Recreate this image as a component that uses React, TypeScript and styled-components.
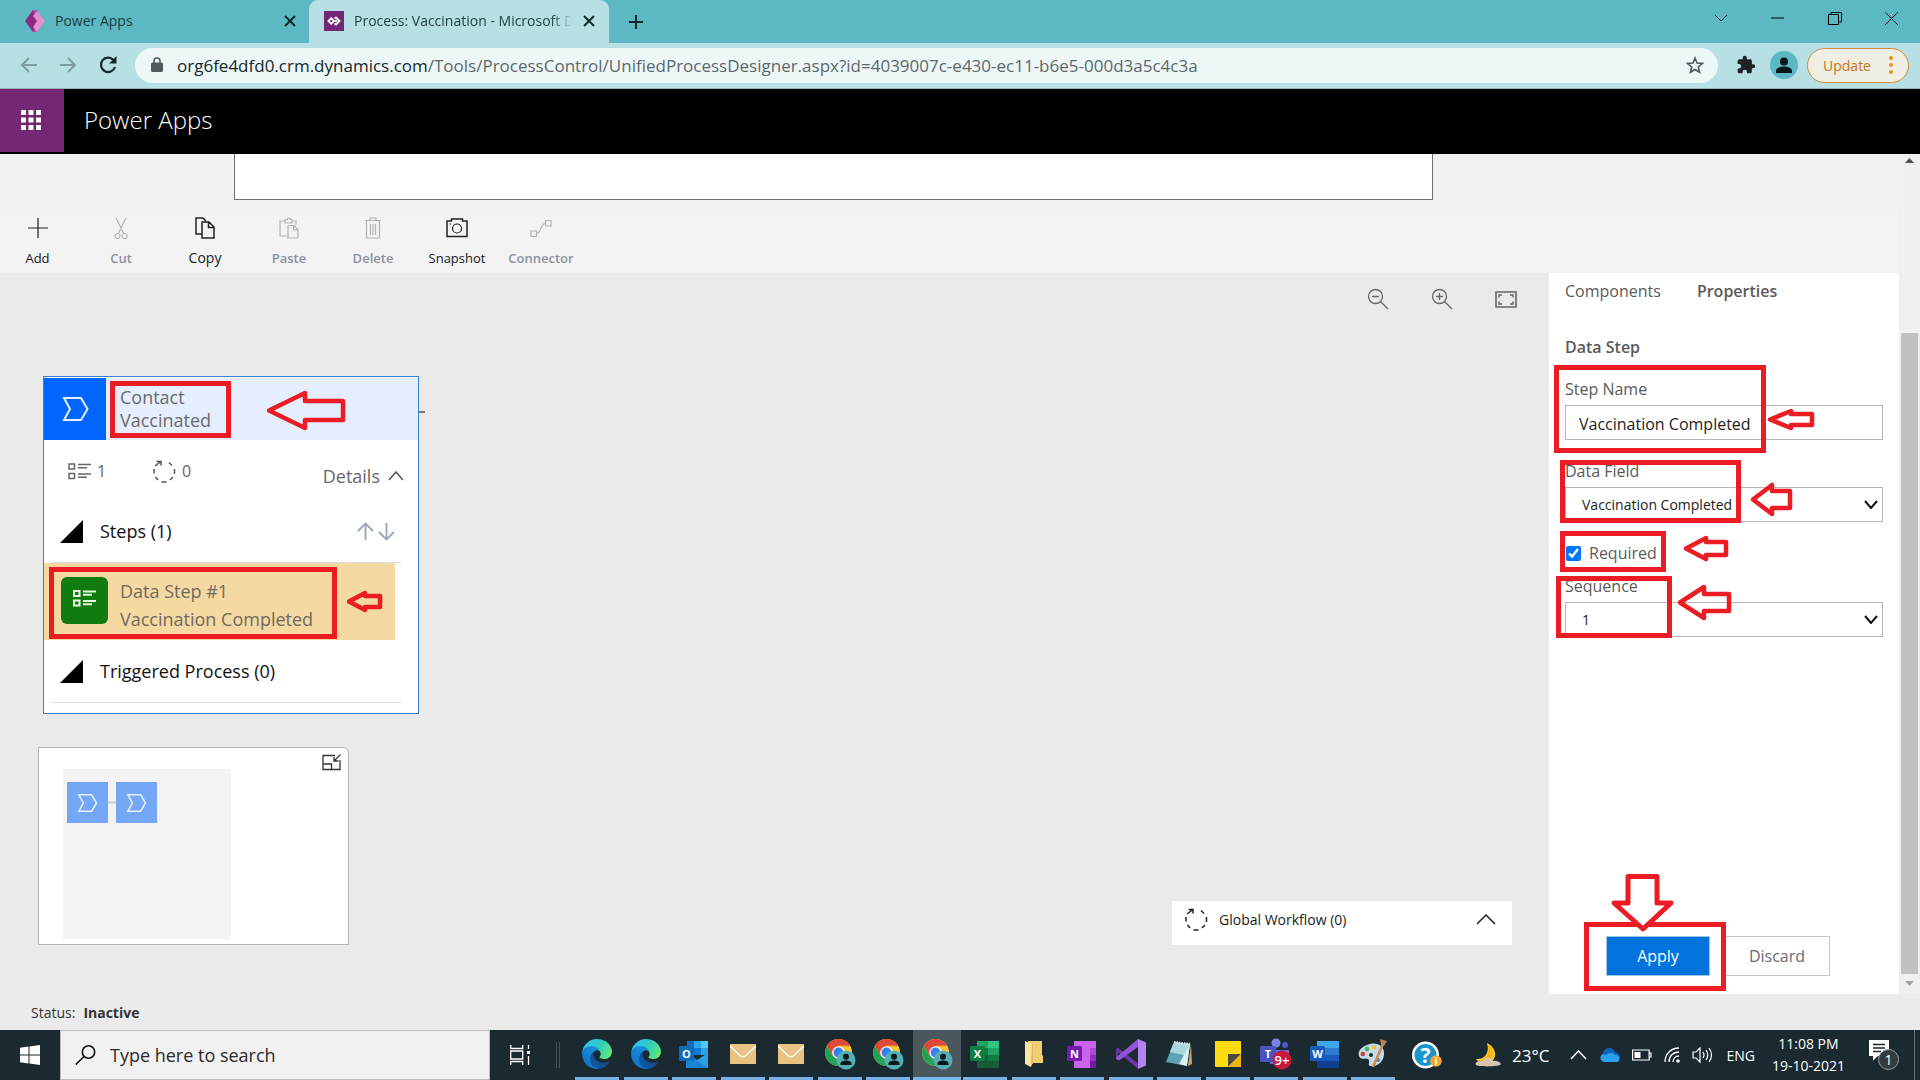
import React from "react";
import styled, { createGlobalStyle } from "styled-components";

const RED = "#ec1c24";

const GlobalStyle = createGlobalStyle`
  *, *::before, *::after { box-sizing: border-box; }
  body { margin: 0; font-family: "Open Sans", "Noto Sans", sans-serif; color: #111; background: #ebebeb; }
  button, input, select, textarea { font: inherit; color: inherit; margin: 0; }
  button { border: 0; padding: 0; background: none; display: flex; align-items: center; justify-content: center; }
  svg { display: block; flex: none; }
`;

/* ---------- layout ---------- */

const Shell = styled.div`
  display: flex;
  flex-direction: column;
  min-height: 100vh;
  overflow: hidden;
`;

const TabStrip = styled.div`
  display: flex;
  height: 43px;
  background: #5cb8c2;
`;

const Tab = styled.div<{ $active?: boolean }>`
  display: flex;
  align-items: center;
  gap: 10px;
  width: ${(p) => (p.$active ? 300 : 309)}px;
  padding: ${(p) => (p.$active ? "0 14px 2px 15px" : "0 13px 2px 25px")};
  border-radius: 9px 9px 0 0;
  background: ${(p) => (p.$active ? "#b7e0e4" : "transparent")};
  font-size: 14px;
  color: #1d3c40;
`;

const TabTitle = styled.span<{ $fade?: boolean }>`
  flex: 1;
  overflow: hidden;
  white-space: nowrap;
  ${(p) => p.$fade && "mask-image: linear-gradient(to right, #000 90%, transparent);"}
`;

const NewTab = styled.button`
  width: 54px;
`;

const WindowControls = styled.div`
  display: flex;
  margin-left: auto;
  height: 36px;
`;

const WindowButton = styled.button`
  width: 57px;
`;

const AddressRow = styled.div`
  display: flex;
  align-items: center;
  height: 46px;
  padding: 0 11px 1px 8px;
  background: #b7e0e4;
  border-bottom: 1px solid #8fb3b6;
`;

const NavButton = styled.button`
  width: 40px;
  height: 36px;
`;

const UrlBox = styled.div`
  display: flex;
  flex: 1;
  align-items: center;
  gap: 13px;
  height: 35px;
  margin-left: 7px;
  padding: 0 14px 0 15px;
  border-radius: 18px;
  background: #edf7f8;
`;

const Url = styled.span`
  flex: 1;
  overflow: hidden;
  white-space: nowrap;
  font-size: 17px;
  color: #5d6769;
  b { font-weight: 400; color: #16282b; }
`;

const BrowserActions = styled.div`
  display: flex;
  align-items: center;
  gap: 14px;
  padding-left: 18px;
`;

const Avatar = styled.button`
  width: 28px;
  height: 28px;
  border-radius: 50%;
  background: #5cb8c2;
`;

const UpdateButton = styled.button`
  gap: 18px;
  width: 102px;
  height: 35px;
  margin-left: -5px;
  border: 1px solid #d28a3c;
  border-radius: 18px;
  background: #efeee2;
  font-size: 14px;
  color: #c8731d;
`;

const AppBar = styled.header`
  display: flex;
  align-items: center;
  height: 65px;
  background: #000;
`;

const Waffle = styled.button`
  align-self: flex-start;
  width: 64px;
  height: 63px;
  padding: 0 2px 1px 0;
  background: #742774;
`;

const AppName = styled.span`
  padding: 0 0 4px 20px;
  font-size: 24px;
  font-weight: 300;
  color: #fff;
`;

const Workspace = styled.main`
  display: flex;
  flex: 1;
`;

const Designer = styled.div`
  display: flex;
  flex: 1;
  flex-direction: column;
`;

const FormStrip = styled.div`
  height: 55px;
  padding-left: 234px;
  background: #f1f1f1;
`;

const Description = styled.textarea`
  display: block;
  width: 72%;
  height: 46px;
  border: 1px solid #6e6e6e;
  border-top: 0;
  border-radius: 0;
  background: #fff;
  resize: none;
`;

const CommandBar = styled.div`
  display: flex;
  height: 64px;
  background: #f3f3f3;
  padding-top: 7px;
`;

const Command = styled.button<{ $large?: boolean }>`
  flex-direction: column;
  justify-content: flex-start;
  gap: 7px;
  width: 84px;
  &:first-child { width: 79px; padding-right: 4px; }
  font-size: ${(p) => (p.$large ? 14 : 13)}px;
  line-height: 22px;
  color: #15171c;
  &:disabled { color: #8a92a2; font-weight: 600; }
`;

const Columns = styled.div`
  display: flex;
  flex: 1;
`;

const ScrollBar = styled.div`
  display: flex;
  flex-direction: column;
  align-items: center;
  width: 21px;
  padding: 4px 0 8px;
  background: #f0f0f0;
`;

const ScrollThumb = styled.div`
  flex: 1;
  width: 17px;
  margin: 170px 0 7px;
  background: #c1c1c1;
`;

const Canvas = styled.section`
  position: relative;
  flex: 1;
  background: #eaeaea;
`;

const ZoomTools = styled.div`
  position: absolute;
  top: 15px;
  right: 32px;
  display: flex;
  gap: 42px;
`;

const StageCard = styled.article`
  position: absolute;
  left: 43px;
  top: 103px;
  width: 376px;
  padding: 1px 0 10px;
  border: 1px solid #3a7fd4;
  background: #fff;
`;

const StageHeader = styled.div`
  display: flex;
  align-items: center;
  gap: 14px;
  background: #e5eeff;
  font-size: 18px;
  line-height: 23px;
  color: #6b6b6b;
`;

const StageIcon = styled.div`
  display: flex;
  align-items: center;
  justify-content: center;
  width: 62px;
  height: 62px;
  background: #0066ff;
`;

const Stub = styled.i`
  position: absolute;
  left: 375px;
  top: 34px;
  width: 6px;
  height: 2px;
  background: #777;
`;

const Stats = styled.div`
  display: flex;
  align-items: center;
  height: 62px;
  padding: 0 14px 0 24px;
  font-size: 16px;
  color: #666;
`;

const Stat = styled.span`
  display: flex;
  align-items: center;
  gap: 6px;
  width: 85px;
`;

const Details = styled.button`
  gap: 8px;
  margin-left: auto;
  padding-top: 9px;
  font-size: 18px;
`;

const GroupRow = styled.div`
  display: flex;
  align-items: center;
  gap: 17px;
  height: 61px;
  margin: 0 17px 0 7px;
  padding: 0 6px 2px 9px;
  border-bottom: 1px solid #dcdcdc;
  font-size: 18px;
  color: #111;
`;

const Reorder = styled.span`
  display: flex;
  gap: 4px;
  margin-left: auto;
`;

const StepRow = styled.div`
  display: flex;
  gap: 12px;
  width: 351px;
  height: 77px;
  margin-bottom: 2px;
  padding: 14px 0 0 17px;
  background: #f5d9a3;
  font-size: 18px;
  line-height: 28px;
  color: #706a5e;
`;

const StepIcon = styled.div`
  display: flex;
  align-items: center;
  justify-content: center;
  width: 47px;
  height: 47px;
  padding-bottom: 5px;
  border-radius: 6px;
  background: #107c10;
`;

const MiniMap = styled.aside`
  position: absolute;
  left: 38px;
  bottom: 49px;
  display: flex;
  justify-content: space-between;
  width: 311px;
  height: 198px;
  padding: 6px 7px 5px 24px;
  border: 1px solid #b4b4b4;
  border-radius: 0 6px 0 0;
  background: #fff;
`;

const MiniView = styled.div`
  display: flex;
  align-items: flex-start;
  width: 168px;
  margin-top: 15px;
  padding: 13px 4px;
  background: #f4f4f4;
`;

const MiniStage = styled.div`
  display: flex;
  align-items: center;
  justify-content: center;
  width: 41px;
  height: 41px;
  background: #74a7f5;
`;

const MiniLink = styled.div`
  align-self: flex-start;
  width: 8px;
  height: 3px;
  margin-top: 19px;
  background: #d6d6d6;
`;

const MiniToggle = styled.button`
  align-self: flex-start;
`;

const GlobalWorkflow = styled.button`
  position: absolute;
  right: 37px;
  bottom: 49px;
  justify-content: flex-start;
  gap: 11px;
  width: 340px;
  height: 44px;
  padding: 0 16px 8px 13px;
  background: #fff;
  font-size: 14px;
  color: #1a1a1a;
  svg:last-child { margin-left: auto; }
`;

const Panel = styled.aside`
  position: relative;
  display: flex;
  flex-direction: column;
  width: 350px;
  padding: 6px 16px 18px;
  background: #fff;
  font-size: 16px;
  line-height: 24px;
  color: #5a5a5a;
`;

const PanelTabs = styled.nav`
  display: flex;
  gap: 36px;
`;

const PanelTab = styled.button<{ $active?: boolean }>`
  font-weight: ${(p) => (p.$active ? 600 : 400)};
`;

const PanelTitle = styled.h2`
  margin: 32px 0 18px;
  font-size: 16px;
  line-height: 24px;
  font-weight: 600;
`;

const Field = styled.div`
  display: flex;
  flex-direction: column;
  gap: 4px;
  margin-bottom: 19px;
`;

const TextInput = styled.input`
  height: 35px;
  padding: 3px 13px 0;
  border: 1px solid #b5b5b5;
  border-radius: 0;
  font-size: 16px;
  color: #1c1c1c;
`;

const SelectWrap = styled.div`
  display: grid;
  align-items: center;
  > * { grid-area: 1 / 1; }
  > svg { justify-self: end; margin-right: 5px; pointer-events: none; }
`;

const Select = styled.select`
  appearance: none;
  width: 100%;
  height: 35px;
  padding: 0 16px;
  border: 1px solid #b5b5b5;
  border-radius: 0;
  background: #fff;
  font-size: 14px;
  color: #222;
`;

const CheckRow = styled.label`
  display: flex;
  align-items: center;
  gap: 8px;
  margin-bottom: 9px;
  padding-left: 1px;
  input { width: 15px; height: 15px; accent-color: #0075ff; }
`;

const PanelActions = styled.div`
  display: flex;
  gap: 14px;
  margin-top: auto;
  padding-left: 41px;
`;

const ActionButton = styled.button<{ $primary?: boolean }>`
  width: ${(p) => (p.$primary ? 104 : 106)}px;
  height: 40px;
  border: 1px solid ${(p) => (p.$primary ? "#9cc8ee" : "#c8c8c8")};
  background: ${(p) => (p.$primary ? "#0073dc" : "#fff")};
  color: ${(p) => (p.$primary ? "#fff" : "#6b6b6b")};
`;

const StatusBar = styled.footer`
  display: flex;
  align-items: center;
  gap: 8px;
  height: 36px;
  padding: 0 31px;
  background: #ebebeb;
  font-size: 14px;
  color: #333;
`;

const Markup = styled.svg`
  position: absolute;
  left: 0;
  top: 0;
  overflow: visible;
  pointer-events: none;
`;

/* ---------- taskbar layout ---------- */

const Taskbar = styled.div`
  display: flex;
  height: 50px;
  background: #1b2a30;
  color: #fff;
`;

const TaskButton = styled.button<{ $w: number }>`
  width: ${(p) => p.$w}px;
`;

const SearchBox = styled.label`
  display: flex;
  align-items: center;
  gap: 14px;
  width: 430px;
  padding: 0 14px;
  border: 1px solid #bdbdbd;
  background: #f1f1f1;
  color: #111;
  input {
    flex: 1;
    border: 0;
    outline: 0;
    padding: 0;
    background: none;
    font-size: 18px;
    &::placeholder { color: #2b2b2b; opacity: 1; }
  }
`;

const Divider = styled.div`
  align-self: center;
  width: 4px;
  height: 26px;
  margin: 0 13px 0 6px;
  border: solid #47545a;
  border-width: 0 1px;
`;

const Apps = styled.div`
  display: flex;
  justify-content: space-between;
  width: 824px;
`;

const AppButton = styled.button<{ $active?: boolean }>`
  width: 48px;
  border-style: solid;
  border-width: 0 0 3px;
  border-image: ${(p) =>
    p.$active
      ? "linear-gradient(#76b9ed, #76b9ed) 1"
      : "linear-gradient(to right, transparent 5px, #76b0e4 5px, #76b0e4 43px, transparent 43px) 3"};
  background: ${(p) => (p.$active ? "#4a575d" : "transparent")};
`;

const Tray = styled.div`
  display: flex;
  align-items: center;
  margin-left: auto;
  font-size: 17px;
`;

const Weather = styled.button`
  gap: 10px;
  margin-right: 21px;
`;

const TrayIcons = styled.div`
  display: flex;
  align-items: center;
  gap: 12px;
`;

const Language = styled.button`
  padding: 0 17px 0 13px;
  font-size: 14px;
`;

const Clock = styled.button`
  flex-direction: column;
  margin-right: 24px;
  font-size: 14px;
  line-height: 22px;
`;

const ShowDesktop = styled.div`
  align-self: stretch;
  width: 6px;
  margin-left: 14px;
  border-left: 1px solid #69747a;
`;

/* ---------- annotations ---------- */

type BoxProps = { x: number; y: number; w: number; h: number };
const Frame = ({ x, y, w, h }: BoxProps) => (
  <rect x={x + 2.5} y={y + 2.5} width={w - 5} height={h - 5} fill="none" stroke={RED} strokeWidth="5" />
);

/* neck: where the head meets the shaft; inset: gap between head edge and shaft edge */
const LeftArrow = ({ x, y, w, h, neck, inset }: BoxProps & { neck: number; inset: number }) => {
  const l = x + 2, r = x + w - 2, t = y + 3, b = y + h - 3, n = x + neck - 2;
  const st = y + inset + 2, sb = y + h - inset - 2;
  return (
    <path
      d={`M${l} ${y + h / 2}L${n} ${t}V${st}H${r}V${sb}H${n}V${b}Z`}
      fill="none" stroke={RED} strokeWidth="4.500" strokeLinejoin="round"
    />
  );
};

/* ---------- small icons ---------- */

const Close = () => (
  <svg width="12" height="12" viewBox="0 0 12 12" stroke="#10282b" strokeWidth="2"><path d="M1 1l10 10M11 1L1 11" /></svg>
);

const Chevron = ({ w = 16, h = 9, sw = 1.5, c = "#555", down = false }) => (
  <svg width={w} height={h} viewBox={`0 0 ${w} ${h}`} fill="none" stroke={c} strokeWidth={sw}>
    <path d={down ? `M1 1L${w / 2} ${h - 1}L${w - 1} 1` : `M1 ${h - 1}L${w / 2} 1L${w - 1} ${h - 1}`} />
  </svg>
);

const StageGlyph = ({ w = 27, h = 24 }) => (
  <svg width={w} height={h} viewBox="0 0 27 24" fill="none" stroke="#e8f1ff" strokeWidth="2">
    <path d="M2 1H19L25.500 12L19 23H2L8 12Z" />
  </svg>
);

const ListGlyph = ({ c = "#666", sw = 1.5 }) => (
  <svg width="23" height="18" viewBox="0 0 23 18" fill="none" stroke={c} strokeWidth={sw}>
    <path d="M1 2h5.500v5H1zM1 11.500h5.500v5H1zM10 2.500h13M10 5.700h9M10 12h13M10 15.200h9" />
  </svg>
);

const CycleGlyph = ({ c = "#555" }) => (
  <svg width="23" height="23" viewBox="0 0 23 23" fill="none" stroke={c} strokeWidth="1.500">
    <path d="M2 6L8 1.500M3.500 1.500H8V5.500" />
    <path d="M16 2.500l3 3M21.500 9v5M20 17l-3 3M13.500 22h-5M5 20l-2.500-3M1 13.500V9" />
  </svg>
);

const Triangle = () => (
  <svg width="23" height="23" viewBox="0 0 23 23"><path d="M23 0V23H0Z" fill="#000" /></svg>
);

const Arrow = ({ down = false }) => (
  <svg width="17" height="19" viewBox="0 0 17 19" fill="none" stroke="#9aa5b5" strokeWidth="1.800">
    <path d={down ? "M8.500 1V17M1 10L8.500 17.500L16 10" : "M8.500 18V2M1 9L8.500 1.500L16 9"} />
  </svg>
);

const Magnifier = ({ plus = false }) => (
  <svg width="22" height="22" viewBox="0 0 22 22" fill="none" stroke="#666" strokeWidth="1.300">
    <circle cx="8.500" cy="8.500" r="7" />
    <path d={`M13.500 13.500L21 21M5 8.500h7${plus ? "M8.500 5v7" : ""}`} />
  </svg>
);

const commandIcons: Record<string, React.ReactNode> = {
  Add: <path d="M12 2v20M2 12h20" stroke="#222" />,
  Cut: <path d="M7 2l8 16M17 2L9 18M8.500 17.500a2.500 2.500 0 1 0 .1 0M15.500 17.500a2.500 2.500 0 1 0 .1 0" />,
  Copy: <path d="M9 18H3V2h7l3 3M9 6h7l5 5v11H9zM15.500 6v5.500H21" strokeWidth="1.500" />,
  Paste: <path d="M10 20H3V5h5M15 5h4v4M8 3.500h2.500a1.500 1.500 0 0 1 3 0H15V7H8zM11 9.500h6l4 4V22H11zM16.500 9.500v4.500H21" />,
  Delete: <path d="M4 4.500h16M9 4.500V2h6v2.500M5.500 4.500V22h13V4.500M9.500 8v11M12 8v11M14.500 8v11" />,
  Snapshot: <><path d="M2 5h4.500V3h11v2H22v15.500H2z" strokeWidth="1.500" /><circle cx="12" cy="12.500" r="4.500" /><path d="M4.500 8h1.500" /></>,
  Connector: <path d="M2 15h5.500v5.500H2zM16.500 4.500H22V10h-5.500zM7.500 17.500c5.500 0 3-10 9-10" />,
};

const commands = [
  { label: "Add" },
  { label: "Cut", off: true },
  { label: "Copy", large: true },
  { label: "Paste", off: true },
  { label: "Delete", off: true },
  { label: "Snapshot" },
  { label: "Connector", off: true },
];

/* ---------- taskbar icons ---------- */

const Edge = () => (
  <svg width="30" height="30" viewBox="4 4 257 257">
    <defs>
      <linearGradient id="edgeA" x1="0" x2="1"><stop offset="0" stopColor="#0c59a4" /><stop offset="1" stopColor="#114a8b" /></linearGradient>
      <linearGradient id="edgeB" x1="1" y1="0" x2="0.300" y2="1"><stop offset="0" stopColor="#1b9de2" /><stop offset="1" stopColor="#0f6fc6" /></linearGradient>
      <linearGradient id="edgeC" x1="0" y1="0.300" x2="1" y2="0.700"><stop offset="0" stopColor="#35c1f1" /><stop offset="0.500" stopColor="#2fcac0" /><stop offset="1" stopColor="#66eb6e" /></linearGradient>
    </defs>
    <path fill="url(#edgeA)" d="M235.700 195.500a93.700 93.700 0 01-10.600 4.700 101.900 101.900 0 01-35.900 6.400c-47.300 0-88.500-32.500-88.500-74.300a31.500 31.500 0 0116.400-27.300c-42.800 1.800-53.800 46.400-53.800 72.500 0 74 68.100 81.400 82.800 81.400 7.900 0 19.800-2.300 27-4.600l1.300-.4a128.300 128.300 0 0066.600-52.800 4 4 0 00-5.300-5.600z" />
    <path fill="url(#edgeB)" d="M110.300 246.300A79.200 79.200 0 0187.600 225a80.700 80.700 0 0129.500-120c3.200-1.500 8.500-4.100 15.600-4a32.400 32.400 0 0125.700 13 31.900 31.900 0 016.300 18.700c0-.2 24.500-79.600-80-79.600-43.900 0-80 41.600-80 78.200a130.200 130.200 0 0012.100 56 128 128 0 00156.400 67 75.500 75.500 0 01-62.800-8z" />
    <path fill="url(#edgeC)" d="M156.900 153.800c-.8 1-3.300 2.500-3.300 5.700 0 2.600 1.700 5.100 4.700 7.200 14.400 10 41.500 8.700 41.600 8.700a59.600 59.600 0 0030.300-8.300 61.400 61.400 0 0030.400-52.900c.3-22.400-8-37.300-11.300-43.900C228 28.900 182.300 4.700 132.600 4.700A128 128 0 004.600 131c.5-36.500 36.800-66 80-66 3.500 0 23.500.3 42 10a72.600 72.600 0 0130.900 29.300c6.100 10.600 7.200 24.100 7.200 29.500s-2.700 13.300-7.800 20z" />
  </svg>
);

const Letter = ({ c, fill, children }: { c: string; fill: string; children?: React.ReactNode }) => (
  <svg width="30" height="30" viewBox="0 0 30 30">
    {children}
    <rect x="0" y="7" width="15" height="15" rx="1.500" fill={fill} />
    <text x="7.500" y="18.500" textAnchor="middle" fontSize="11" fontWeight="700" fill="#fff">{c}</text>
  </svg>
);

const Outlook = () => (
  <Letter c="O" fill="#0f6cbd">
    <path d="M8 2h21v14H8z" fill="#1570c0" /><path d="M15 2h7v7h-7z" fill="#28a8ea" /><path d="M22 2h7v7h-7z" fill="#50c8f8" />
    <path d="M15 9h7v7h-7z" fill="#0f78d4" /><path d="M22 9h7v7h-7z" fill="#2aa3e6" />
    <path d="M7 14l11 7 11-7v15H7z" fill="#2f9fe8" /><path d="M7 14l22 15H7z" fill="#1a84d6" />
  </Letter>
);

const Mail = () => (
  <svg width="26" height="20" viewBox="0 0 26 20"><path d="M0 0h26v20H0z" fill="#e9c283" /><path d="M0 2L10 11.500Q13 14 16 11.500L26 2" fill="none" stroke="#fffaf0" strokeWidth="1.600" /></svg>
);

const Chrome = () => (
  <svg width="32" height="32" viewBox="0 0 32 32">
    <circle cx="14.500" cy="14.500" r="13.500" fill="#fbc834" />
    <path d="M2.800 7.800A13.500 13.500 0 0 1 26.200 7.800H14.500L8.700 17.800Z" fill="#e0473b" />
    <path d="M2.800 7.800A13.500 13.500 0 0 0 14.500 28L20.300 18L8.700 17.800Z" fill="#24a057" />
    <path d="M14.500 8.300H26.400" stroke="#f3a92c" strokeWidth="1" />
    <circle cx="14.500" cy="14.500" r="6.300" fill="#fff" /><circle cx="14.500" cy="14.500" r="4.900" fill="#3b7ded" />
    <circle cx="22" cy="22" r="9.500" fill="#55adb6" />
    <circle cx="22" cy="18.800" r="3" fill="#08191c" /><path d="M16.500 27v-1.500c0-4 11-4 11 0V27z" fill="#08191c" />
  </svg>
);

const Excel = () => (
  <Letter c="X" fill="#107c41">
    <path d="M7 2h11v7H7z" fill="#21a366" /><path d="M18 2h11v7H18z" fill="#33c481" /><path d="M7 9h11v7H7z" fill="#107c41" />
    <path d="M18 9h11v7H18z" fill="#21a366" /><path d="M7 16h22v13H7z" fill="#185c37" /><path d="M18 16h11v6H18z" fill="#107c41" />
  </Letter>
);

const Folder = () => (
  <svg width="20" height="27" viewBox="0 0 20 27"><path d="M4 1h14v14l1 1v7H4z" fill="#f0cf72" /><path d="M1 1l7 3v20l-1 3-6-3z" fill="#fbe3a0" /><path d="M8 4h1v20H7z" fill="#dcb75d" /></svg>
);

const OneNote = () => (
  <Letter c="N" fill="#7719aa">
    <path d="M7 2h22v27H7z" fill="#ca64ea" /><path d="M23 9h6v7h-6z" fill="#ae4bd5" /><path d="M23 16h6v6h-6z" fill="#9332bf" /><path d="M23 22h6v7h-6z" fill="#7719aa" />
  </Letter>
);

const VisualStudio = () => (
  <svg width="30" height="30" viewBox="0 0 30 30">
    <path d="M0 10l2-1.200 20 15.700V30L2 13v7l-2-1z" fill="#6a34a8" />
    <path d="M22 0v8L3 21.500 0 20v-1.500z" fill="#8f55d6" />
    <path d="M22 0l8 3.500v23L22 30z" fill="#b583f0" />
  </svg>
);

const Notepad = () => (
  <svg width="28" height="28" viewBox="0 0 28 28">
    <path d="M26 4l1 20-4 2z" fill="#c7a56a" /><path d="M9 2l16 2-3 22-21-4z" fill="#5fa3b2" /><path d="M9 2l16 2-2 12L5 12z" fill="#a9d8df" />
    <path d="M25 4l-3 22-8-2z" fill="#dbeef0" /><path d="M9 2l16 2" stroke="#eee" strokeWidth="2" strokeDasharray="1.500 1" />
  </svg>
);

const StickyNote = () => (
  <svg width="26" height="26" viewBox="0 0 26 26"><rect width="26" height="26" rx="1" fill="#ffdc0f" /><path d="M13 13h13L13 26z" fill="#4a4a42" /><path d="M26 13v13H13z" fill="#f0b310" /></svg>
);

const Teams = () => (
  <svg width="32" height="32" viewBox="0 0 32 32">
    <circle cx="16" cy="5" r="4.500" fill="#7b83eb" /><circle cx="25" cy="7" r="3" fill="#5059c9" />
    <path d="M10 12h19v8c0 4-3 6-6 6H10z" fill="#6870dd" />
    <rect x="0" y="8" width="16" height="16" rx="1.500" fill="#4b53bc" />
    <text x="8" y="20" textAnchor="middle" fontSize="11" fontWeight="700" fill="#fff">T</text>
    <circle cx="22" cy="22" r="9.500" fill="#c8183c" />
    <text x="22" y="27" textAnchor="middle" fontSize="13" fontWeight="600" fill="#fff">9+</text>
  </svg>
);

const Word = () => (
  <Letter c="W" fill="#185abd">
    <path d="M7 2h22v7H7z" fill="#41a5ee" /><path d="M7 9h22v7H7z" fill="#2b7cd3" /><path d="M7 16h22v6H7z" fill="#185abd" /><path d="M7 22h22v7H7z" fill="#103f91" />
  </Letter>
);

const Paint = () => (
  <svg width="30" height="30" viewBox="0 0 30 30">
    <path d="M12 5C20 3 27 8 26 16s-8 12-14 11c-3-1 1-5-2-7s-7 2-9-3C-1 11 5 7 12 5z" fill="#c3dcec" />
    <circle cx="4.800" cy="15" r="2.300" fill="#d33f2e" /><circle cx="9" cy="10" r="2.300" fill="#58b04a" /><circle cx="16" cy="8.500" r="2.300" fill="#f0c23a" /><circle cx="13" cy="16" r="2" fill="#1b2a30" /><circle cx="20" cy="21" r="2" fill="#4a7fd0" />
    <path d="M15 28L25 5" stroke="#d08a45" strokeWidth="2.500" /><path d="M23 5l-1-5 7 2-3 5z" fill="#b98250" />
  </svg>
);

const apps: { name: string; Icon: React.FC; active?: boolean }[] = [
  { name: "Edge", Icon: Edge }, { name: "Edge", Icon: Edge }, { name: "Outlook", Icon: Outlook },
  { name: "Mail", Icon: Mail }, { name: "Mail", Icon: Mail }, { name: "Chrome", Icon: Chrome },
  { name: "Chrome", Icon: Chrome }, { name: "Chrome", Icon: Chrome, active: true }, { name: "Excel", Icon: Excel },
  { name: "Files", Icon: Folder }, { name: "OneNote", Icon: OneNote }, { name: "Visual Studio", Icon: VisualStudio },
  { name: "Notepad", Icon: Notepad }, { name: "Sticky Notes", Icon: StickyNote }, { name: "Teams", Icon: Teams },
  { name: "Word", Icon: Word }, { name: "Paint", Icon: Paint },
];

/* ---------- sections ---------- */

const BrowserChrome = () => (
  <>
    <TabStrip>
      <Tab>
        <svg width="20" height="22" viewBox="0 0 20 22">
          <path d="M8 0L14 10L8 22L0 11Z" fill="#8a2a83" /><path d="M8 0h4l4 10-4 12H8l4-11z" fill="#b8479f" /><path d="M12 1l8 10-8 11-4-5 4-6-4-5z" fill="#e68fd0" />
        </svg>
        <TabTitle>Power Apps</TabTitle>
        <button aria-label="Close tab"><Close /></button>
      </Tab>
      <Tab $active>
        <svg width="20" height="20" viewBox="0 0 20 20" fill="none" stroke="#fff" strokeWidth="1.800">
          <path d="M0 0h20v20H0z" fill="#742774" stroke="none" /><path d="M7.200 7.200L10 10l-2.800 2.800L4.400 10zM10.500 7.500L12 6.500 15.500 10 12 13.500l-1.500-1" /><path d="M12 9v2" />
        </svg>
        <TabTitle $fade>Process: Vaccination - Microsoft D</TabTitle>
        <button aria-label="Close tab"><Close /></button>
      </Tab>
      <NewTab aria-label="New tab">
        <svg width="16" height="16" viewBox="0 0 16 16" stroke="#10282b" strokeWidth="2"><path d="M8 1v14M1 8h14" /></svg>
      </NewTab>
      <WindowControls>
        <WindowButton aria-label="Search tabs"><Chevron w={14} h={8} sw={1} c="#123" down /></WindowButton>
        <WindowButton aria-label="Minimize"><svg width="13" height="2" viewBox="0 0 13 2"><path d="M0 1h13" stroke="#000" /></svg></WindowButton>
        <WindowButton aria-label="Restore">
          <svg width="14" height="13" viewBox="0 0 14 13" fill="none" stroke="#000"><path d="M.5 2.500h10v10H.5zM3 2.500v-2h10.500v9.500h-3" /></svg>
        </WindowButton>
        <WindowButton aria-label="Close"><svg width="13" height="13" viewBox="0 0 13 13" stroke="#000"><path d="M0 0l13 13M13 0L0 13" /></svg></WindowButton>
      </WindowControls>
    </TabStrip>
    <AddressRow>
      <NavButton aria-label="Back"><svg width="17" height="16" viewBox="0 0 17 16" fill="none" stroke="#7e9b9e" strokeWidth="2"><path d="M17 8H2M9 1L2 8l7 7" /></svg></NavButton>
      <NavButton aria-label="Forward"><svg width="17" height="16" viewBox="0 0 17 16" fill="none" stroke="#7e9b9e" strokeWidth="2"><path d="M0 8h15M8 1l7 7-7 7" /></svg></NavButton>
      <NavButton aria-label="Reload">
        <svg width="18" height="18" viewBox="0 0 18 18" fill="none" stroke="#16282b" strokeWidth="2.200"><path d="M14.500 4A7.200 7.200 0 1 0 16 11" /><path d="M17.500 0v7.500H10z" fill="#16282b" stroke="none" /></svg>
      </NavButton>
      <UrlBox>
        <svg width="14" height="16" viewBox="0 0 14 16"><rect x="1" y="5.500" width="12" height="9.500" rx="1.500" fill="#4f5a5c" /><path d="M4 6V4a3 3 0 0 1 6 0v2" fill="none" stroke="#4f5a5c" strokeWidth="1.600" /></svg>
        <Url><b>org6fe4dfd0.crm.dynamics.com</b>/Tools/ProcessControl/UnifiedProcessDesigner.aspx?id=4039007c-e430-ec11-b6e5-000d3a5c4c3a</Url>
        <button aria-label="Bookmark">
          <svg width="18" height="18" viewBox="0 0 18 18" fill="none" stroke="#4f5a5c" strokeWidth="1.600"><path d="M9 2l2 5 5.500.4-4.200 3.600 1.300 5.300L9 13.500l-4.600 2.800L5.700 11 1.500 7.400 7 7z" /></svg>
        </button>
      </UrlBox>
      <BrowserActions>
        <button aria-label="Extensions">
          <svg width="20" height="20" viewBox="0 0 24 24" fill="#202124"><path d="M20.500 11H19V7a2 2 0 0 0-2-2h-4V3.500a2.500 2.500 0 0 0-5 0V5H4a2 2 0 0 0-2 2v3.800h1.500a2.700 2.700 0 0 1 0 5.400H2V20a2 2 0 0 0 2 2h3.800v-1.500a2.700 2.700 0 0 1 5.400 0V22H17a2 2 0 0 0 2-2v-4h1.500a2.500 2.500 0 0 0 0-5z" /></svg>
        </button>
        <Avatar aria-label="Profile"><svg width="16" height="17" viewBox="0 0 16 17"><circle cx="8" cy="4.500" r="4" fill="#08191c" /><path d="M0 16v-2c0-6 16-6 16 0v2z" fill="#08191c" /></svg></Avatar>
        <UpdateButton>
          Update
          <svg width="4" height="18" viewBox="0 0 4 18" fill="#e6941f"><circle cx="2" cy="2" r="2" /><circle cx="2" cy="9" r="2" /><circle cx="2" cy="16" r="2" /></svg>
        </UpdateButton>
      </BrowserActions>
    </AddressRow>
  </>
);

const Stage = () => (
  <StageCard>
    <StageHeader>
      <StageIcon><StageGlyph /></StageIcon>
      <div>Contact<br />Vaccinated</div>
    </StageHeader>
    <Stats>
      <Stat><ListGlyph />1</Stat>
      <Stat><CycleGlyph />0</Stat>
      <Details>Details <Chevron h={10} /></Details>
    </Stats>
    <GroupRow>
      <Triangle />Steps (1)
      <Reorder><Arrow /><Arrow down /></Reorder>
    </GroupRow>
    <StepRow>
      <StepIcon><ListGlyph c="#e6f5e0" sw={2} /></StepIcon>
      <div>Data Step #1<br />Vaccination Completed</div>
    </StepRow>
    <GroupRow><Triangle />Triggered Process (0)</GroupRow>
    <Stub />
    <Markup width="374" height="334">
      <Frame x={66} y={4} w={121} h={57} />
      <LeftArrow x={223} y={13} w={78} h={41} neck={40} inset={9} />
      <Frame x={5} y={190} w={288} h={72} />
      <LeftArrow x={303} y={213} w={35} h={23} neck={20} inset={4} />
    </Markup>
  </StageCard>
);

const DesignCanvas = () => (
  <Canvas>
    <ZoomTools>
      <button aria-label="Zoom out"><Magnifier /></button>
      <button aria-label="Zoom in"><Magnifier plus /></button>
      <button aria-label="Fit to canvas">
        <svg width="22" height="17" viewBox="0 0 22 17" fill="none" stroke="#666"><path d="M1 1h20v15H1z" strokeWidth="1.600" /><path d="M4 6.500V4h3M15 4h3v2.500M18 10.500V13h-3M7 13H4v-2.500" strokeWidth="1.400" /></svg>
      </button>
    </ZoomTools>
    <Stage />
    <MiniMap>
      <MiniView>
        <MiniStage><StageGlyph w={21} h={18} /></MiniStage>
        <MiniLink />
        <MiniStage><StageGlyph w={21} h={18} /></MiniStage>
      </MiniView>
      <MiniToggle aria-label="Collapse map">
        <svg width="19" height="17" viewBox="0 0 19 17" fill="none" stroke="#333" strokeWidth="1.300"><path d="M13 1.500H1v14h17V6M1 10h8.500v5.500M18.500.5L12 7M12 3v4h4.500" /></svg>
      </MiniToggle>
    </MiniMap>
    <GlobalWorkflow><CycleGlyph c="#222" />Global Workflow (0)<Chevron w={20} h={11} c="#222" /></GlobalWorkflow>
  </Canvas>
);

const SelectChevron = () => <Chevron w={14} h={9} sw={2} c="#111" down />;

const PropertiesPanel = () => (
  <Panel>
    <PanelTabs>
      <PanelTab>Components</PanelTab>
      <PanelTab $active>Properties</PanelTab>
    </PanelTabs>
    <PanelTitle>Data Step</PanelTitle>
    <Field>
      <label htmlFor="stepName">Step Name</label>
      <TextInput id="stepName" defaultValue="Vaccination Completed" />
    </Field>
    <Field>
      <label htmlFor="dataField">Data Field</label>
      <SelectWrap>
        <Select id="dataField"><option>Vaccination Completed</option></Select>
        <SelectChevron />
      </SelectWrap>
    </Field>
    <CheckRow><input type="checkbox" defaultChecked />Required</CheckRow>
    <Field>
      <label htmlFor="sequence">Sequence</label>
      <SelectWrap>
        <Select id="sequence"><option>1</option></Select>
        <SelectChevron />
      </SelectWrap>
    </Field>
    <PanelActions>
      <ActionButton $primary>Apply</ActionButton>
      <ActionButton>Discard</ActionButton>
    </PanelActions>
    <Markup width="350" height="720">
      <Frame x={5} y={92} w={212} h={88} />
      <LeftArrow x={219} y={135} w={46} h={23} neck={25} inset={4} />
      <Frame x={11} y={187} w={181} h={63} />
      <LeftArrow x={202} y={209} w={41} h={35} neck={23} inset={7} />
      <Frame x={11} y={258} w={106} h={41} />
      <LeftArrow x={135} y={262} w={44} h={27} neck={24} inset={5} />
      <Frame x={7} y={303} w={116} h={62} />
      <LeftArrow x={129} y={311} w={53} h={37} neck={28} inset={8} />
      <Frame x={35} y={649} w={142} h={69} />
      <path d="M79 603.500H108V630H122L94 656L65 630H79Z" fill="#fff" stroke={RED} strokeWidth="5" strokeLinejoin="round" />
    </Markup>
  </Panel>
);

const SystemTaskbar = () => (
  <Taskbar>
    <TaskButton $w={60} aria-label="Start">
      <svg width="20" height="20" viewBox="0 0 20 20" fill="#fff"><path d="M0 2.800L8.500 1.600V9.500H0zM9.500 1.400L20 0V9.500H9.500zM0 10.500h8.500v8L0 17.200zM9.500 10.500H20V20L9.500 18.600z" /></svg>
    </TaskButton>
    <SearchBox>
      <svg width="21" height="20" viewBox="0 0 21 20" fill="none" stroke="#111" strokeWidth="1.600"><circle cx="13.500" cy="7" r="6.200" /><path d="M9 11.500L.8 19.500" /></svg>
      <input aria-label="Search" placeholder="Type here to search" />
    </SearchBox>
    <TaskButton $w={60} aria-label="Task view">
      <svg width="21" height="20" viewBox="0 0 21 20" fill="none" stroke="#fff" strokeWidth="1.300"><path d="M.7 0v3.500h12V0M.7 6h12v8H.7zM.7 20v-3.500h12V20M18.500 0v4M18.500 11v9" /><path d="M17 6h3v3h-3z" fill="#fff" stroke="none" /></svg>
    </TaskButton>
    <Divider />
    <Apps>
      {apps.map(({ name, Icon, active }, i) => (
        <AppButton key={i} $active={active} aria-label={name}><Icon /></AppButton>
      ))}
    </Apps>
    <TaskButton $w={60} aria-label="Help">
      <svg width="30" height="28" viewBox="0 0 30 28">
        <circle cx="13.500" cy="14" r="13.500" fill="#fff" /><circle cx="13.500" cy="14" r="11" fill="#1795cf" />
        <text x="13.500" y="21.500" textAnchor="middle" fontSize="21" fontWeight="700" fill="#fff">?</text>
        <circle cx="24" cy="20" r="5.800" fill="#f0a92c" /><text x="24" y="24" textAnchor="middle" fontSize="10" fontWeight="700" fill="#fff">i</text>
      </svg>
    </TaskButton>
    <Tray>
      <Weather>
        <svg width="29" height="26" viewBox="0 0 29 26"><path d="M14 1c12 6 10 20-1 20-5 0-9-2-10-4 9 1 14-7 11-16z" fill="#fbd021" /><path d="M14 1c6 5 7 11 4 16-3 3-9 3-13 1 9 0 13-8 9-17z" fill="#f4b418" /><path d="M3 23c-2-3 4-5 7-4 2-5 9-4 10 0 3-1 7 1 8 3 0 3-24 3-25 1z" fill="#d8c4b0" /></svg>
        23°C
      </Weather>
      <TrayIcons>
        <Chevron w={17} h={10} c="#fff" />
        <svg width="21" height="14" viewBox="0 0 21 14"><path d="M4 12a4 4 0 0 1 0-7c1-6 10-7 12-1 6 1 6 8 2 9z" fill="#0f62b8" /><path d="M2 12c-2-4 2-7 5-5 4-4 8-2 9 0 5-1 6 6 2 7H5c-1 0-2-1-3-2z" fill="#2ba0ea" /></svg>
        <svg width="20" height="12" viewBox="0 0 20 12" fill="none" stroke="#fff" strokeWidth="1.200"><path d="M.6 1h16.500v10H.6zM17.500 4h1.500v4h-1.500" /><path d="M2.500 3h6v6h-6z" fill="#fff" stroke="none" /></svg>
        <svg width="16" height="16" viewBox="0 0 16 16" fill="none" stroke="#fff" strokeWidth="1.300"><path d="M1 15C1 7 7 1 15 1M5 15C5 9 9 5 15 5M9 15c0-3.500 2.500-6 6-6" /><circle cx="14" cy="14" r="1.800" fill="#fff" stroke="none" /></svg>
        <svg width="21" height="18" viewBox="0 0 21 18" fill="none" stroke="#fff" strokeWidth="1.200"><path d="M1 6h3l4-4v14l-4-4H1zM11 6q2 3 0 6M14 4q3.500 5 0 10M17 2q5 7 0 14" /></svg>
      </TrayIcons>
      <Language>ENG</Language>
      <Clock><span>11:08 PM</span><span>19-10-2021</span></Clock>
      <button aria-label="Notifications">
        <svg width="31" height="32" viewBox="0 0 31 32"><path d="M0 1h20v16H9l-5 4.500V17H0z" fill="#fff" /><path d="M4 5.500h12M4 9h12M4 12.500h8" stroke="#1b2a30" strokeWidth="1.300" /><circle cx="19.500" cy="20.500" r="10" fill="#333b3f" stroke="#9aa2a5" /><text x="19.500" y="25.500" textAnchor="middle" fontSize="14" fill="#fff">1</text></svg>
      </button>
      <ShowDesktop />
    </Tray>
  </Taskbar>
);

export default function App() {
  return (
    <Shell>
      <GlobalStyle />
      <BrowserChrome />
      <AppBar>
        <Waffle aria-label="App launcher">
          <svg width="20" height="20" viewBox="0 0 20 20" fill="#fff">
            {[0, 7.500, 15].map((y) => [0, 7.500, 15].map((x) => <rect key={`${x}-${y}`} x={x} y={y} width="5" height="5" />))}
          </svg>
        </Waffle>
        <AppName>Power Apps</AppName>
      </AppBar>
      <Workspace>
        <Designer>
          <FormStrip><Description aria-label="Description" /></FormStrip>
          <CommandBar>
            {commands.map(({ label, off, large }) => (
              <Command key={label} disabled={off} $large={large}>
                <svg width="24" height="24" viewBox="0 0 24 24" fill="none" stroke={off ? "#b3b3b3" : "#222"} strokeWidth="1.200">{commandIcons[label]}</svg>
                {label}
              </Command>
            ))}
          </CommandBar>
          <Columns>
            <DesignCanvas />
            <PropertiesPanel />
          </Columns>
        </Designer>
        <ScrollBar>
          <svg width="9" height="5" viewBox="0 0 9 5"><path d="M0 5L4.500 0L9 5z" fill="#505050" /></svg>
          <ScrollThumb />
          <svg width="9" height="5" viewBox="0 0 9 5"><path d="M0 0L4.500 5L9 0z" fill="#a3a3a3" /></svg>
        </ScrollBar>
      </Workspace>
      <StatusBar>Status: <b>Inactive</b></StatusBar>
      <SystemTaskbar />
    </Shell>
  );
}
